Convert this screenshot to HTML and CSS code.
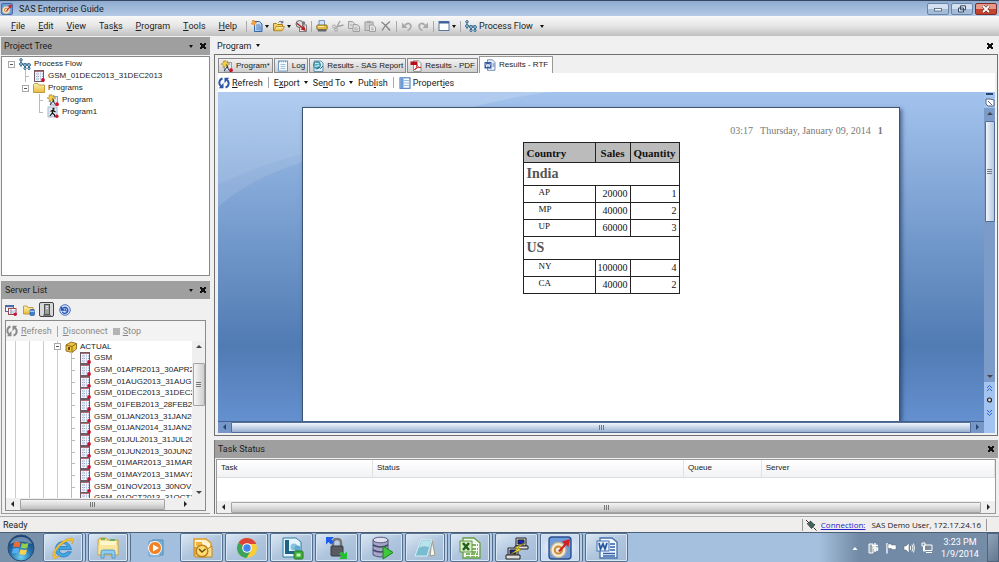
FILE: index.html
```html
<!DOCTYPE html>
<html lang="en">

<head>
	<meta charset="UTF-8" />
	<meta name="viewport" content="width=device-width, initial-scale=1.0" />
	<title>SAS Enterprise Guide</title>
	<link rel="stylesheet" href="styles.css">
</head>

<body>
	<!-- icon sprite -->
	<svg class="sprite" width="0" height="0" aria-hidden="true">
		<defs>
			<linearGradient id="gfolder" x1="0" y1="0" x2="0" y2="1"><stop offset="0" stop-color="#fff3b0" /><stop offset="1" stop-color="#e8b93c" /></linearGradient>
			<linearGradient id="gblue" x1="0" y1="0" x2="1" y2="1"><stop offset="0" stop-color="#eaf4ff" /><stop offset="1" stop-color="#7fb0e4" /></linearGradient>
			<radialGradient id="gorb" cx=".5" cy=".85" r=".8"><stop offset="0" stop-color="#6fd3f0" /><stop offset=".5" stop-color="#2873ae" /><stop offset="1" stop-color="#173f73" /></radialGradient>
		</defs>
		<symbol id="flow" viewBox="0 0 12 12">
			<path d="M2 1v8M2 6h8M6 6v4M10 6v4" stroke="#3b7898" fill="none" />
			<g fill="#d8f0fa" stroke="#1d5c86"><circle cx="2" cy="1.8" r="1.2" /><circle cx="2" cy="6" r="1.4" /><circle cx="6" cy="7" r="1.4" /><circle cx="10" cy="7" r="1.4" /><circle cx="10" cy="10.4" r="1.1" /><circle cx="6" cy="10.4" r="1.1" /></g>
		</symbol>
		<symbol id="data" viewBox="0 0 12 12">
			<rect x="1.500" y=".5" width="9" height="11" fill="#f4f6fa" stroke="#6b5b66" />
			<path d="M2 1.500h8" stroke="#b76a74" /><path d="M3 4h7M3 6.500h7M3 9h5" stroke="#8fa3cc" stroke-dasharray="1 1" /><path d="M4.500 2v9M7.500 2v9" stroke="#c3cbe0" stroke-width=".6" />
			<circle cx="10" cy="10" r="1.900" fill="#c8102e" />
		</symbol>
		<symbol id="folder" viewBox="0 0 12 12"><path d="M.5 10.500v-8l1-1h3l1 1.500h6v7.500z" fill="url(#gfolder)" stroke="#b48a25" stroke-width=".8" /></symbol>
		<symbol id="run" viewBox="0 0 12 12">
			<rect x="1" y="1" width="9" height="10" fill="#dfe8f4" stroke="#9aa8bd" stroke-width=".8" />
			<circle cx="6.500" cy="2.800" r="1.100" fill="#111" /><path d="M6.300 4 5.300 7l2 1.500.5 2.200M5.300 7 3 10M3.500 5.500l2.300-1.200 2.700 1.700" stroke="#111" stroke-width="1.200" fill="none" />
			<circle cx="9.800" cy="10.200" r="1.800" fill="#d01530" />
		</symbol>
		<symbol id="prog" viewBox="0 0 12 12">
			<rect x="3.500" y="2.500" width="7" height="8.500" fill="#dfe8f4" stroke="#7d8da5" stroke-width=".8" />
			<path d="m4 0 1 2 2-1-.6 2.200L9 4 6.500 5l.5 2.500L4.500 6 2 8l.3-3L0 4l2.300-1L2 .8l1.500 1z" fill="#f3cf45" stroke="#a87b10" stroke-width=".5" />
			<path d="M3 11l3-4 2 3M5.500 4.500l1.500 3" stroke="#333" fill="none" /><circle cx="10" cy="10.200" r="1.900" fill="#d01530" />
		</symbol>
		<symbol id="sas" viewBox="0 0 12 12">
			<rect x=".5" y=".5" width="11" height="11" rx="1.500" fill="#6f9ada" stroke="#2c4f8c" stroke-width=".7" />
			<circle cx="5.200" cy="7" r="3.800" fill="#f1ead9" stroke="#c0b28f" stroke-width=".7" /><circle cx="5.200" cy="7" r="1.800" fill="none" stroke="#c98a31" />
			<path d="M5 7.500 8.200 4 7 2.800l4-1.300-.8 4-1-1L6 8z" fill="#d6201f" />
		</symbol>
		<symbol id="new" viewBox="0 0 12 12">
			<path d="M3.500 1.500h5l2.500 2.500v7.500H3.500z" fill="url(#gblue)" stroke="#3568ab" /><path d="M5 5h4M5 7h5M5 9h5" stroke="#3c72b5" stroke-width=".8" /><path d="m3 0 .8 2L6 2.500 4 3.600 3.600 6 2.300 4.200 0 4l1.500-1.400L1 .8z" fill="#ffa53a" stroke="#c96c10" stroke-width=".4" />
		</symbol>
		<symbol id="open" viewBox="0 0 12 12"><path d="M.5 10.500v-7h3l1 1h5v2" fill="#f5d465" stroke="#ab7d18" /><path d="m.8 10.800 2.200-4.300h8.500L9 10.800z" fill="url(#gfolder)" stroke="#ab7d18" stroke-width=".8" /><path d="M5.500 2.500c1-1.500 3-1.500 4 0M9.800.8v2H7.800" stroke="#3a3a3a" fill="none" stroke-width=".8" /></symbol>
		<symbol id="help" viewBox="0 0 12 12"><rect x="4.500" y="5" width="7" height="6.500" fill="#eee" stroke="#666" stroke-width=".8" /><circle cx="4.500" cy="4" r="3.500" fill="#ddd" stroke="#666" /><path d="M2 2.500 7.500 7 9 5.500 11 11 5.500 9.500 7 8 1.500 4z" fill="#bd1d23" /><circle cx="8.500" cy="3" r="1.700" fill="#777" /></symbol>
		<symbol id="print" viewBox="0 0 12 12"><path d="M3 5V.5h5.500V5" fill="#cfe0f7" stroke="#5a7fb4" stroke-width=".8" /><rect x=".8" y="5" width="10.400" height="4.500" rx="1" fill="#e6b93f" stroke="#7b5d15" stroke-width=".8" /><path d="M1.800 9.500h8.500v2H1.800z" fill="#5f6571" /><path d="M2 6.500h6" stroke="#fff0b6" /></symbol>
		<symbol id="cut" viewBox="0 0 12 12"><path d="M8 1 4.500 7.500M11.500 5 4 7" stroke="#a4a4a4" stroke-width="1.300" fill="none" /><circle cx="2" cy="6.500" r="1.500" fill="none" stroke="#a4a4a4" /><circle cx="4" cy="9.700" r="1.500" fill="none" stroke="#a4a4a4" /></symbol>
		<symbol id="copy" viewBox="0 0 12 12"><g fill="#dcdcdc" stroke="#a0a0a0"><path d="M.5 1.500h4l2 2v5h-6z" /><path d="M5 4.500h4l2.500 2v5H5z" /></g><path d="M6.500 8h3M6.500 9.800h3.500M2 5h2" stroke="#a0a0a0" stroke-width=".8" /></symbol>
		<symbol id="paste" viewBox="0 0 12 12"><rect x="1" y="2" width="8" height="8.500" fill="#c9c9c9" stroke="#a0a0a0" /><rect x="3" y=".8" width="4" height="2.200" fill="#aaa" /><path d="M5.500 5h3.500l2.500 2v4.500h-6z" fill="#e6e6e6" stroke="#a0a0a0" /><path d="M7 8h2.500M7 9.700h3" stroke="#a0a0a0" stroke-width=".8" /></symbol>
		<symbol id="del" viewBox="0 0 12 12"><path d="M1.500 2c3 2 6 5 8.500 8.500M10 1.500C7 3.500 4 7 2 10.500" stroke="#828282" stroke-width="1.300" fill="none" /></symbol>
		<symbol id="undo" viewBox="0 0 12 12"><path d="M4 5.500C7 1.500 11 4 9.500 8c-.5 1.300-1.500 2-3 2.500" fill="none" stroke="#a8a8a8" stroke-width="1.700" /><path d="M1 2.500V8h5.500z" fill="#a8a8a8" /></symbol>
		<symbol id="win" viewBox="0 0 12 12"><rect x="1" y="1.500" width="10" height="9" fill="#fdfdfd" stroke="#56779f" /><path d="M1 2.500h10" stroke="#39639b" stroke-width="2" /></symbol>
		<symbol id="refresh" viewBox="0 0 12 12"><path d="M4.500 1.500C1 2.500.3 7 3 9.300M7.500 10.500C11 9.500 11.700 5 9 2.700" fill="none" stroke="currentColor" stroke-width="2" /><path d="M5.500 5.800v5.500H.8zM6.500 6.200V.7h4.700z" fill="currentColor" /></symbol>
		<symbol id="log" viewBox="0 0 12 12"><rect x="1.500" y="1" width="9" height="10" fill="#f4fafd" stroke="#6f97bd" /><path d="M2 1.500h8" stroke="#73a0ca" stroke-width="1.500" stroke-dasharray="1 1" /><path d="M3.500 4.500h5M3.500 6.500h5M3.500 8.500h5" stroke="#8db3d2" stroke-width=".8" /></symbol>
		<symbol id="report" viewBox="0 0 12 12"><path d="M2 1h7l2 2v8.500H2z" fill="#d9edf5" stroke="#4f7f9a" stroke-width=".8" /><circle cx="5" cy="5" r="3.500" fill="#4faabc" stroke="#1e6c86" stroke-width=".7" /><path d="M3 3.500c2-1 3 1 4 0M2.500 6c2 1 3-1 5 0" stroke="#e6fbff" fill="none" /><path d="M5 9.500 7 7l1.500 1.500L11 6" stroke="#1c688b" fill="none" /></symbol>
		<symbol id="pdf" viewBox="0 0 12 12"><path d="M3.500.8h5l2.500 2.500v8H3.500z" fill="#fff" stroke="#777" stroke-width=".8" /><path d="M.5 1.500h7v3.500h-7z" fill="#b90e17" /><path d="M4.500 10C6 9 7.300 6 6.700 4.500c2 3 3 3.500 4 3C8 7 6 8 4.500 10z" fill="none" stroke="#c41821" /></symbol>
		<symbol id="rtf" viewBox="0 0 12 12"><path d="M3.500.8h5l2.500 2.500v8H3.500z" fill="#eaf2ff" stroke="#5575a5" stroke-width=".8" /><rect x=".5" y="3" width="7" height="6.500" fill="#35589c" /><path d="m1.800 4.500 1 3.500L4 5l1.200 3 1-3.500" stroke="#fff" stroke-width=".9" fill="none" /><path d="M8.500 5h2M8.500 7h2" stroke="#5575a5" /></symbol>
		<symbol id="prop" viewBox="0 0 12 12"><rect x="1" y=".8" width="10" height="10.500" fill="#f8fbff" stroke="#3e6fae" /><path d="M1.500 1.300h3v9.500h-3z" fill="#5c96dd" /><path d="M4.500 3.500H11M4.500 6H11M4.500 8.500H11M1 3.500h3M1 6h3M1 8.500h3" stroke="#86a9d4" stroke-width=".8" /></symbol>
		<symbol id="cube" viewBox="0 0 12 12"><path d="m1 4 5-3 5.500 1.500V8L7 11.500 1 10z" fill="#edc141" stroke="#7c5d0e" stroke-width=".8" /><path d="m1 4 6 1.500v6M7 5.500l4.500-3" stroke="#7c5d0e" stroke-width=".8" fill="none" /><path d="M3 6h2v3H3z" fill="#6b5010" /></symbol>
		<symbol id="server" viewBox="0 0 12 12"><rect x="3.500" y=".5" width="5" height="10" fill="#9aa3a0" stroke="#4b5250" /><path d="M5 2.500h2M5 4.500h2" stroke="#eef" /><path d="M2 11.300h8" stroke="#666" /></symbol>
		<symbol id="globe" viewBox="0 0 12 12"><circle cx="6" cy="6" r="5.300" fill="#cfe0fa" stroke="#4f74bd" /><path d="M3.500 4.500a3 3 0 1 1-.3 3.300" stroke="#2450b0" stroke-width="1.300" fill="none" /><path d="M2 2.500v4h3.500zM6 4v2.500l2 1" fill="#2450b0" stroke="#2450b0" stroke-width=".6" /></symbol>
		<symbol id="libfolder" viewBox="0 0 12 12"><path d="M.5 10v-8h3.500l1 1.500h5V10z" fill="url(#gfolder)" stroke="#b48a25" stroke-width=".8" /><rect x="7" y="5.500" width="4.500" height="6" rx="1" fill="#3f7ed0" stroke="#1d4f94" stroke-width=".6" /><path d="M7 7.300h4.500" stroke="#bcd8ff" /></symbol>
		<symbol id="tables" viewBox="0 0 12 12"><rect x=".5" y="1.500" width="8" height="6" fill="#fff" stroke="#506a9a" /><path d="M.5 2.500h8" stroke="#4a6fb0" stroke-width="1.500" /><rect x="3.500" y="4.500" width="7.500" height="6" fill="#fff" stroke="#9c4a52" /><path d="M5 7h5M5 9h4M6 5v5" stroke="#8496bf" stroke-width=".8" /><circle cx="10.200" cy="10.200" r="1.700" fill="#c8102e" /></symbol>
		<symbol id="plug" viewBox="0 0 12 12"><path d="m1 1 3 3M8.500 8.500l3 3M2 5l4-3M6 9l4-4" stroke="#333" /><path d="m3 5.500 3-3 3.500 3.500-3 3.500z" fill="#3c6864" stroke="#222" stroke-width=".7" /></symbol>
	</svg>

	<header class="titlebar">
		<svg class="icon"><use href="#sas" /></svg>
		<h1>SAS Enterprise Guide</h1>
		<div class="winbtns">
			<button aria-label="Minimize"><svg viewBox="0 0 12 8"><rect x="2.500" y="3.500" width="7" height="2.500" fill="#fff" stroke="#4b5d78" stroke-width=".8" /></svg></button>
			<button aria-label="Restore"><svg viewBox="0 0 12 8"><path d="M4.500.8h5v4h-5zM2.500 3h5v4h-5z" fill="#dfe9f6" stroke="#3b4a62" /></svg></button>
			<button class="close" aria-label="Close"><svg viewBox="0 0 12 8"><path d="m3 1 6 6M9 1 3 7" stroke="#5b2a2a" stroke-width="3" /><path d="m3 1 6 6M9 1 3 7" stroke="#fff" stroke-width="1.800" /></svg></button>
		</div>
	</header>

	<div class="menubar">
		<nav class="menus">
			<button><u>F</u>ile</button>
			<button><u>E</u>dit</button>
			<button><u>V</u>iew</button>
			<button>Tas<u>k</u>s</button>
			<button><u>P</u>rogram</button>
			<button><u>T</u>ools</button>
			<button><u>H</u>elp</button>
		</nav>
		<div class="tools">
			<i class="sep"></i>
			<button class="drop" aria-label="New"><svg class="icon"><use href="#new" /></svg></button>
			<button class="drop" aria-label="Open"><svg class="icon"><use href="#open" /></svg></button>
			<button aria-label="Data"><svg class="icon"><use href="#help" /></svg></button>
			<i class="sep"></i>
			<button aria-label="Print"><svg class="icon"><use href="#print" /></svg></button>
			<button aria-label="Cut"><svg class="icon"><use href="#cut" /></svg></button>
			<button aria-label="Copy"><svg class="icon"><use href="#copy" /></svg></button>
			<button aria-label="Paste"><svg class="icon"><use href="#paste" /></svg></button>
			<button aria-label="Delete"><svg class="icon"><use href="#del" /></svg></button>
			<i class="sep"></i>
			<button aria-label="Undo"><svg class="icon"><use href="#undo" /></svg></button>
			<button aria-label="Redo"><svg class="icon flip"><use href="#undo" /></svg></button>
			<i class="sep"></i>
			<button class="drop" aria-label="Window"><svg class="icon"><use href="#win" /></svg></button>
			<i class="sep"></i>
			<button class="drop flowbtn"><svg class="icon"><use href="#flow" /></svg><span>Process Flow</span></button>
		</div>
	</div>

	<main class="main">
		<aside class="side">
			<section class="panel project">
				<div class="panelhead"><h2>Project Tree</h2><button class="caret" aria-label="Options"></button><button class="x" aria-label="Close"></button></div>
				<ul class="tree">
					<li><i class="exp"></i><svg class="icon"><use href="#flow" /></svg>Process Flow</li>
					<li class="l1"><i class="twig"></i><svg class="icon"><use href="#data" /></svg>GSM_01DEC2013_31DEC2013</li>
					<li class="l1"><i class="exp"></i><svg class="icon"><use href="#folder" /></svg>Programs</li>
					<li class="l2"><i class="twig"></i><svg class="icon"><use href="#prog" /></svg>Program</li>
					<li class="l2"><i class="twig last"></i><svg class="icon"><use href="#run" /></svg>Program1</li>
				</ul>
			</section>
			<section class="panel server">
				<div class="panelhead"><h2>Server List</h2><button class="caret" aria-label="Options"></button><button class="x" aria-label="Close"></button></div>
				<div class="servertools">
					<button aria-label="Tables"><svg class="icon"><use href="#tables" /></svg></button>
					<button aria-label="Libraries"><svg class="icon"><use href="#libfolder" /></svg></button>
					<button class="on" aria-label="Servers"><svg class="icon"><use href="#server" /></svg></button>
					<button aria-label="Web"><svg class="icon"><use href="#globe" /></svg></button>
				</div>
				<div class="inset">
					<div class="actions">
						<button disabled><svg class="icon"><use href="#refresh" /></svg><span><u>R</u>efresh</span></button>
						<i class="sep"></i>
						<button disabled><span><u>D</u>isconnect</span></button>
						<button disabled><i class="stop"></i><span><u>S</u>top</span></button>
					</div>
					<div class="listrow">
						<ul class="tree serverlist">
							<li class="root"><i class="exp"></i><svg class="icon"><use href="#cube" /></svg>ACTUAL</li>
							<li><i class="twig"></i><svg class="icon"><use href="#data" /></svg>GSM</li>
							<li><i class="twig"></i><svg class="icon"><use href="#data" /></svg>GSM_01APR2013_30APR2013</li>
							<li><i class="twig"></i><svg class="icon"><use href="#data" /></svg>GSM_01AUG2013_31AUG2013</li>
							<li><i class="twig"></i><svg class="icon"><use href="#data" /></svg>GSM_01DEC2013_31DEC2013</li>
							<li><i class="twig"></i><svg class="icon"><use href="#data" /></svg>GSM_01FEB2013_28FEB2013</li>
							<li><i class="twig"></i><svg class="icon"><use href="#data" /></svg>GSM_01JAN2013_31JAN2013</li>
							<li><i class="twig"></i><svg class="icon"><use href="#data" /></svg>GSM_01JAN2014_31JAN2014</li>
							<li><i class="twig"></i><svg class="icon"><use href="#data" /></svg>GSM_01JUL2013_31JUL2013</li>
							<li><i class="twig"></i><svg class="icon"><use href="#data" /></svg>GSM_01JUN2013_30JUN2013</li>
							<li><i class="twig"></i><svg class="icon"><use href="#data" /></svg>GSM_01MAR2013_31MAR2013</li>
							<li><i class="twig"></i><svg class="icon"><use href="#data" /></svg>GSM_01MAY2013_31MAY2013</li>
							<li><i class="twig"></i><svg class="icon"><use href="#data" /></svg>GSM_01NOV2013_30NOV2013</li>
							<li><i class="twig"></i><svg class="icon"><use href="#data" /></svg>GSM_01OCT2013_31OCT2013</li>
						</ul>
						<div class="vscroll"><i class="arr up"></i><i class="thumb"></i><i class="arr down"></i></div>
					</div>
					<div class="hscroll side-h"><i class="arr left"></i><i class="thumb"></i><i class="arr right"></i></div>
				</div>
			</section>
		</aside>

		<div class="work">
			<div class="workhead"><button class="drop">Program</button><button class="x" aria-label="Close"></button></div>
			<section class="results">
				<div class="tabs">
					<button><svg class="icon"><use href="#prog" /></svg>Program*</button>
					<button><svg class="icon"><use href="#log" /></svg>Log</button>
					<button><svg class="icon"><use href="#report" /></svg>Results - SAS Report</button>
					<button><svg class="icon"><use href="#pdf" /></svg>Results - PDF</button>
					<button class="active"><svg class="icon"><use href="#rtf" /></svg>Results - RTF</button>
				</div>
				<div class="toolbar">
					<button class="blue"><svg class="icon"><use href="#refresh" /></svg><span><u>R</u>efresh</span></button>
					<i class="sep"></i>
					<button class="drop"><span>E<u>x</u>port</span></button>
					<button class="drop"><span>Se<u>n</u>d To</span></button>
					<button><span>Pub<u>l</u>ish</span></button>
					<i class="sep"></i>
					<button><svg class="icon"><use href="#prop" /></svg><span>Propert<u>i</u>es</span></button>
				</div>
				<div class="viewer">
					<div class="docarea">
						<div class="canvas">
							<svg class="swoosh" viewBox="0 0 766 329" preserveAspectRatio="none">
								<path d="M0 0h330Q290 6 255 15L85 62Q35 75 0 93z" fill="#fff" fill-opacity=".16" />
								<path d="M0 93Q35 75 85 62v8Q35 85 0 115z" fill="#fff" fill-opacity=".1" />
							</svg>
							<article class="page">
								<p class="stamp"><span>03:17</span><span>Thursday, January 09, 2014</span><b>1</b></p>
								<table class="report">
									<colgroup><col class="c1"><col class="c2"><col class="c3"></colgroup>
									<thead>
										<tr><th>Country</th><th class="r">Sales</th><th class="r">Quantity</th></tr>
									</thead>
									<tbody>
										<tr class="group"><th colspan="3">India</th></tr>
										<tr><td>AP</td><td>20000</td><td>1</td></tr>
										<tr><td>MP</td><td>40000</td><td>2</td></tr>
										<tr><td>UP</td><td>60000</td><td>3</td></tr>
										<tr class="group"><th colspan="3">US</th></tr>
										<tr><td>NY</td><td>100000</td><td>4</td></tr>
										<tr><td>CA</td><td>40000</td><td>2</td></tr>
									</tbody>
								</table>
							</article>
						</div>
						<div class="hscroll doc-h"><i class="arr left"></i><i class="thumb"></i><i class="arr right"></i></div>
					</div>
					<div class="doc-v">
						<i class="split"></i>
						<svg class="ruler" viewBox="0 0 10 10"><path d="M1 2h4l4 1v6H3L1 7z" fill="#fff" stroke="#57627a" /><path d="M3 4l4 4" stroke="#57627a" /></svg>
						<div class="vscroll"><i class="arr up"></i><i class="thumb"></i><i class="arr down"></i></div>
						<svg class="browse" viewBox="0 0 11 37"><path d="M3 6l2.500-2.500L8 6M3 9l2.500-2.500L8 9M3 28l2.500 2.500L8 28M3 31l2.500 2.500L8 31" fill="none" stroke="#2d62d8" /><circle cx="5.500" cy="18" r="2" fill="#ddd" stroke="#222" stroke-width="1.200" /></svg>
					</div>
				</div>
			</section>
			<section class="status">
				<div class="panelhead"><h2>Task Status</h2><button class="x" aria-label="Close"></button></div>
				<div class="tasks">
					<table class="tasktable">
						<colgroup><col class="t1"><col class="t2"><col class="t3"><col></colgroup>
						<thead><tr><th>Task</th><th>Status</th><th>Queue</th><th>Server</th></tr></thead>
					</table>
					<div class="hscroll task-h"><i class="arr left"></i><i class="thumb"></i><i class="arr right"></i></div>
				</div>
			</section>
		</div>
	</main>

	<footer class="statusbar">
		<span class="ready">Ready</span>
		<div class="conn"><svg class="icon"><use href="#plug" /></svg><a href="#">Connection:</a><span>SAS Demo User, 172.17.24.16</span></div>
	</footer>

	<div class="taskbar">
		<button class="start" aria-label="Start"><svg viewBox="0 0 28 28"><circle cx="14" cy="14" r="13" fill="url(#gorb)" stroke="#2a4c74" /><path d="M7 9q3-2 6.500-.5L12.500 13.500Q9 12 6 13.500z" fill="#ee6a35" /><path d="M14.800 9q3 1.500 6.700 0l-1.200 5q-3 1.300-6.500-.2z" fill="#93cf4b" /><path d="M5.800 14.800q3-1.500 6.500-.2l-1.200 5q-3-1.500-6.300.2z" fill="#55aef0" /><path d="M13.500 15.200q3 1.500 6.500.2l-1.200 4.800q-3.300 1.300-6.500-.2z" fill="#fbd24b" /><path d="M3 10a12 12 0 0 1 22 0Q14 5 3 10z" fill="#fff" fill-opacity=".35" /></svg></button>
		<button class="app stack" aria-label="Internet Explorer"><svg viewBox="0 0 24 24"><path d="M20.500 13.500H8.300c.3 5 5.700 5.500 7.700 2.300h4.200C16.500 24 4.500 22 4.500 13S18 2 20.500 13.500zM8.500 10.600h7.800c-.6-4-7-4-7.800 0z" fill="#3fa8e6" stroke="#1c70b5" stroke-width=".7" /><path d="M2.500 22C-1 18 9 3 20 2c4 0 2.500 4 1 6 .5-2 .5-4-2-3.500C10 6 2 17 4.500 20c1.500 1.500 4-.5 5-1C7 22 4 23.500 2.500 22z" fill="#f5c431" stroke="#c18d14" stroke-width=".4" /></svg></button>
		<button class="app stack" aria-label="Explorer"><svg viewBox="0 0 24 24"><path d="M2 19V4l2-2h6l2 2h10v15z" fill="#f6dc85" stroke="#c9a441" /><path d="M4 5h16v5H4z" fill="#fff6cc" /><path d="M5 3h4M14 4h5" stroke="#4aa65a" stroke-width="1.500" /><path d="M2.500 9h19v9h-19z" fill="#f9e59b" /><path d="M5 22v-6q0-2 2-2h10q2 0 2 2v6h-3v-4H8v4z" fill="#8fcdf0" stroke="#448cba" stroke-width=".8" /></svg></button>
		<button class="app plain" aria-label="Media Player"><svg viewBox="0 0 24 24"><path d="M8 4h11v15H8z" fill="#79b5df" stroke="#5289b4" /><path d="M5 5h11v15H5z" fill="#a6d0ee" stroke="#6b9fc6" /><circle cx="11" cy="12" r="6.500" fill="#f28125" stroke="#fff" /><path d="M9 8.500v7l6-3.500z" fill="#fff" /></svg></button>
		<button class="app" aria-label="Outlook"><svg viewBox="0 0 24 24"><path d="M4 3h12l5 4v12H4z" fill="#fff3cd" stroke="#dd9d2c" stroke-width="1.500" /><path d="M6 6h6v4H6z" fill="#f2b33c" /><path d="m5 11 8 5 9-6v11H5z" fill="#fbdc8b" stroke="#c5861c" /><circle cx="12" cy="15" r="5.800" fill="#ffdd72" stroke="#be811c" stroke-width="1.500" /><path d="m9 13 3 3 3.500-3" stroke="#6c4b13" stroke-width="1.500" fill="none" /></svg></button>
		<button class="app" aria-label="Chrome"><svg viewBox="0 0 24 24"><circle cx="12" cy="12" r="10" fill="#fbce37" /><path d="M12 12 3.300 7A10 10 0 0 1 21 7.500H12z" fill="#dc4437" /><path d="M3.300 7A10 10 0 0 0 11.500 22L16 14.500 12 12z" fill="#3da25a" /><path d="M12 7.500h9.100" stroke="#dc4437" /><circle cx="12" cy="12" r="4.800" fill="#fff" /><circle cx="12" cy="12" r="3.700" fill="#4286ed" /></svg></button>
		<button class="app" aria-label="Lync"><svg viewBox="0 0 24 24"><path d="M3 2h13l5 4v15H3z" fill="#e6f4fb" stroke="#2b7ea3" /><path d="M5 4h4v11h5v3H5z" fill="#1f6386" /><circle cx="14" cy="11" r="3.500" fill="#85c1dc" /><circle cx="17.500" cy="12.500" r="3" fill="#5faacc" /><rect x="14" y="15" width="9" height="8" rx="1.500" fill="#3eae36" stroke="#22771e" /><rect x="16.500" y="17.500" width="4" height="3" fill="#c4f1bb" /></svg></button>
		<button class="app" aria-label="Secure copy"><svg viewBox="0 0 24 24"><path d="M8 11V7q0-4 4-4t4 4v4" fill="none" stroke="#777" stroke-width="2.500" /><rect x="6" y="10" width="12" height="10" rx="1" fill="#585c62" stroke="#36393d" /><path d="M1 1h8L6.500 3.500 9 6 6 8.500 3.500 6 1 8.500z" fill="#1d5ded" /><path d="M22 23h-8l2.500-2.500L14 18l2.500-2.500L19.500 18l2.500-2.500z" fill="#24bf31" /></svg></button>
		<button class="app" aria-label="Database"><svg viewBox="0 0 24 24"><path d="M3 4v15q7.500 4 15 0V4z" fill="#a5a5c6" stroke="#555580" /><ellipse cx="10.500" cy="4" rx="7.500" ry="2.800" fill="#e0e0ef" stroke="#555580" /><path d="M3 9q7.500 4 15 0M3 14q7.500 4 15 0" stroke="#44446e" stroke-width="1.500" fill="none" /><path d="M13 10v13l10-6.500z" fill="#41c83c" stroke="#187d1c" /></svg></button>
		<button class="app stack" aria-label="Notepad"><svg viewBox="0 0 24 24"><path d="m19 4 3 15-5 1z" fill="#f6f6ef" stroke="#9a9a8a" /><path d="M8 4h11l-5 16H2z" fill="#79bbd0" stroke="#d7eef5" /><path d="M8.500 5H18l-2 6Q9 9 6 12z" fill="#b8e3ed" /></svg></button>
		<button class="app stack" aria-label="Excel"><svg viewBox="0 0 24 24"><path d="M5 2h11l6 5v15H5z" fill="#f4faef" stroke="#679c46" stroke-width="1.300" /><path d="M14 9h6M14 13h6M8 18h12M14 16h6M8 21h12" stroke="#7fb55e" stroke-width="2" stroke-dasharray="4 1" /><rect x="2" y="5" width="12" height="11" fill="#d7edc5" stroke="#5d9640" /><path d="m5 7 6 7M11 7l-6 7" stroke="#245f1f" stroke-width="2.500" /></svg></button>
		<button class="app" aria-label="PuTTY"><svg viewBox="0 0 24 24"><g stroke="#222"><path d="M11 2h10v8H11z" fill="#ccc" /><path d="M13 4h6v4h-6z" fill="#1624b5" /><path d="M10 10h13v3H10z" fill="#ddd" /><path d="M3 12h10v7H3z" fill="#ccc" /><path d="M5 14h6v3.500H5z" fill="#1624b5" /><path d="M1 19h14v4H1z" fill="#ddd" /></g><path d="m19 7-9 5 3 1-7 5 10-4-3-2z" fill="#ffed2d" stroke="#8b7b06" stroke-width=".6" /></svg></button>
		<button class="app stack current" aria-label="SAS Enterprise Guide"><svg><use href="#sas" /></svg></button>
		<button class="app" aria-label="Word"><svg viewBox="0 0 24 24"><path d="M5 2h12l5 4v16H5z" fill="#f5f9ff" stroke="#4270ad" stroke-width="1.300" /><path d="M15 8h5M15 11h5M15 14h5M8 17.500h12M8 20h12" stroke="#315fa6" stroke-width="1.500" /><rect x="2" y="5" width="12" height="10" fill="#e5effc" stroke="#416fad" /><path d="m4 7 1.500 6L8 8l2 5 2-6" stroke="#26569d" stroke-width="1.800" fill="none" /></svg></button>
		<div class="tray">
			<svg viewBox="0 0 12 12"><path d="M3.500 8h5L6 5z" fill="#fff" /></svg>
			<svg viewBox="0 0 12 12"><path d="M2 2h4v9H2z" fill="#9aa" stroke="#fff" /><path d="M5 3.500h6M8 1v9M6 6h4.500v2H7" stroke="#fff" stroke-width="1.400" fill="none" /></svg>
			<svg viewBox="0 0 12 12"><path d="M2 1v10.500" stroke="#fff" stroke-width="1.300" /><path d="M3 2h3.500v1H11v4.500H6.500v-1H3z" fill="#fff" stroke="#56697e" stroke-width=".5" /></svg>
			<svg viewBox="0 0 12 12"><path d="M1 4h2l3-3v10L3 8H1z" fill="#fff" stroke="#56697e" stroke-width=".5" /><path d="M7.500 4v4M9 2.500q2 3.500 0 7M10.500 1.500q2 4.500 0 9" stroke="#fff" fill="none" stroke-width=".9" /></svg>
			<svg viewBox="0 0 12 12"><path d="M3.500 3H11v5.500H3.500z" fill="#7b8b9b" stroke="#fff" /><path d="M5 10.500h6M1 1h3v3H1zM2.500 4v5h2" stroke="#fff" fill="none" /></svg>
		</div>
		<div class="clock"><time>3:23 PM</time><time>1/9/2014</time></div>
		<button class="desk" aria-label="Show desktop"></button>
	</div>
</body>

</html>
```
FILE: styles.css
```css
* {
	padding: 0;
	margin: 0;
	list-style: none;
	box-sizing: border-box;
}

body {
	display: flex;
	flex-direction: column;
	height: 100vh;
	overflow: hidden;
	background: #f0f0f0;
	color: #1c1c1c;
	font: 9px/12px Roboto, "Open Sans", sans-serif;
}

button {
	display: flex;
	align-items: center;
	border: 0;
	background: none;
	font: inherit;
	color: inherit;
	white-space: nowrap;
}

h1,
h2 {
	font-size: 9px;
	font-weight: normal;
	flex: 1;
}

.sprite {
	position: absolute;
}

.icon {
	width: 12px;
	height: 12px;
	flex: none;
}

.flip {
	transform: scaleX(-1);
}

.sep {
	width: 1px;
	height: 11px;
	background: #a9a9a9;
	flex: none;
}

.drop::after,
.caret::after {
	content: "";
	border: 2px solid transparent;
	border-top: 3px solid #111;
	border-bottom: 0;
	margin-left: 4px;
}

.x {
	width: 8px;
	height: 8px;
	flex: none;
	background:
		linear-gradient(45deg, transparent 40%, #111 40%, #111 60%, transparent 60%) center / 6px 6px no-repeat,
		linear-gradient(-45deg, transparent 40%, #111 40%, #111 60%, transparent 60%) center / 6px 6px no-repeat;
}

/* title and menus */
.titlebar {
	display: flex;
	align-items: center;
	gap: 6px;
	height: 16px;
	padding: 0 2px 0 1px;
	border-top: 1px solid #35475f;
	background: linear-gradient(#8fabd0, #b4cae5);
	flex: none;
}

.winbtns {
	display: flex;
	gap: 2px;
}

.winbtns button {
	width: 22px;
	height: 12px;
	justify-content: center;
	border: 1px solid #6b83a5;
	border-radius: 2px;
	background: linear-gradient(#d2e0f0 45%, #a5bcd8 50%);
}

.winbtns .close {
	border-color: #7c2d25;
	background: linear-gradient(#e59a89 45%, #c4432c 50%);
}

.winbtns svg {
	width: 12px;
	height: 8px;
}

.menubar {
	display: flex;
	align-items: center;
	height: 20px;
	background: linear-gradient(#f8f8f8, #e6e6e6 50%, #bfbfbf);
	flex: none;
}

.menus {
	display: flex;
	gap: 13px;
	width: 246px;
	padding-left: 11px;
}

.tools {
	display: flex;
	align-items: center;
	gap: 4px;
}

.tools .drop::after {
	margin-left: 2px;
}

.flowbtn {
	gap: 2px;
}

.tools .flowbtn::after {
	margin-left: 5px;
}

/* left column */
.main {
	display: flex;
	flex: 1;
	gap: 4px;
	min-height: 0;
	padding: 1px 1px 2px;
}

.side {
	display: flex;
	flex-direction: column;
	gap: 5px;
	width: 209px;
	flex: none;
}

.project {
	display: flex;
	flex-direction: column;
	flex: 1;
	min-height: 0;
}

.panelhead {
	display: flex;
	align-items: center;
	gap: 6px;
	height: 18px;
	padding: 0 3px;
	background: #9f9f9f;
	flex: none;
}

.caret::after {
	margin: 0;
}

.tree {
	font: 8px/12px "Liberation Sans", Arial, sans-serif;
}

.project .tree {
	flex: 1;
	margin-top: 1px;
	padding: 1px 0 0 6px;
	border: 1px solid #888;
	background: #fff;
}

.tree li {
	display: flex;
	align-items: center;
	gap: 3px;
	height: 12px;
	white-space: nowrap;
}

.l1 {
	padding-left: 14px;
}

.l2 {
	padding-left: 28px;
}

.exp,
.twig {
	width: 7px;
	height: 7px;
	margin-right: 1px;
	flex: none;
}

.exp {
	border: 1px solid #a8a8a8;
	background: linear-gradient(#555, #555) center / 3px 1px no-repeat #fff;
}

.twig {
	height: 12px;
	background:
		linear-gradient(#bbb, #bbb) 3px 6px / 4px 1px no-repeat,
		linear-gradient(#bbb, #bbb) 3px 0 / 1px 12px no-repeat;
}

.twig.last {
	background-size: 4px 1px, 1px 6px;
}

.servertools {
	display: flex;
	align-items: center;
	gap: 3px;
	height: 21px;
	padding-left: 1px;
}

.servertools button {
	width: 15px;
	height: 15px;
	justify-content: center;
}

.servertools .on {
	border: 1px solid #444;
	border-radius: 2px;
	background: #d8d8d8;
}

.panel.server {
	border-left: 1px solid #999;
	border-bottom: 1px solid #999;
	padding-bottom: 2px;
}

.inset {
	margin: 0 4px 0 3px;
	border: 1px solid #8b8b8b;
}

.actions {
	display: flex;
	align-items: center;
	gap: 5px;
	height: 20px;
	background: #f3f3f3;
}

.actions button {
	gap: 3px;
	color: #8a8a8a;
}

.stop {
	width: 7px;
	height: 7px;
	background: #b4b4b4;
}

.listrow {
	display: flex;
	height: 157px;
	overflow: hidden;
	background: #fff;
}

.serverlist {
	display: flex;
	flex-direction: column;
	flex: 1;
	height: 163px;
	overflow: hidden;
	background:
		linear-gradient(#ccc, #ccc) 9px 0 / 1px 100% no-repeat,
		linear-gradient(#ccc, #ccc) 23px 0 / 1px 100% no-repeat,
		linear-gradient(#ccc, #ccc) 37px 0 / 1px 100% no-repeat,
		linear-gradient(#ccc, #ccc) 51px 0 / 1px 100% no-repeat;
}

.serverlist li {
	flex: 1;
	min-height: 0;
	padding-left: 62px;
}

.serverlist .root {
	padding-left: 48px;
}

/* scroll bars */
.vscroll,
.hscroll {
	display: flex;
	align-items: center;
	justify-content: space-between;
	background: #efefef;
	flex: none;
}

.vscroll {
	flex-direction: column;
	width: 13px;
	padding: 4px 0;
}

.hscroll {
	height: 12px;
	padding: 0 5px;
}

.arr {
	border: 3px solid transparent;
	flex: none;
}

.up { border-bottom-color: #444; border-top: 0; }
.down { border-top-color: #444; border-bottom: 0; }
.left { border-right-color: #222; border-left: 0; }
.right { border-left-color: #222; border-right: 0; }

.thumb {
	border: 1px solid #a3a3a3;
	border-radius: 1px;
}

.vscroll .thumb {
	width: 12px;
	height: 43px;
	background:
		repeating-linear-gradient(#777 0 1px, transparent 1px 2px) center / 5px 5px no-repeat,
		linear-gradient(90deg, #f6f6f6, #cfcfcf);
}

.hscroll .thumb {
	height: 11px;
	background:
		repeating-linear-gradient(90deg, #777 0 1px, transparent 1px 2px) center / 5px 5px no-repeat,
		linear-gradient(#f4f4f4, #dcdcdc 50%, #bfbfbf);
}

.listrow .vscroll .thumb {
	margin: 15px 0 auto;
}

.side-h .thumb {
	width: 145px;
	margin: 0 auto 0 6px;
}

.side-h {
	padding-right: 18px;
}

/* work area */
.work {
	display: flex;
	flex-direction: column;
	flex: 1;
	min-width: 0;
}

.workhead {
	display: flex;
	align-items: center;
	justify-content: space-between;
	height: 17px;
	padding: 0 4px 0 3px;
	flex: none;
}

.results {
	display: flex;
	flex-direction: column;
	flex: 1;
	min-height: 0;
	padding: 1px 2px 2px 3px;
	border: 1px solid #707070;
}

.tabs {
	display: flex;
	align-items: flex-end;
	height: 17px;
	font-family: "Liberation Sans", Arial, sans-serif;
	font-size: 8px;
	flex: none;
}

.tabs button {
	gap: 3px;
	height: 15px;
	margin-right: 1px;
	padding: 0 2px;
	border: 1px solid #8a8a8a;
	background: linear-gradient(#f2f2f2, #cfcfcf);
}

.tabs .active {
	height: 17px;
	padding: 0 4px;
	border-color: #999;
	border-bottom: 0;
	background: #fff;
}

.toolbar {
	display: flex;
	align-items: center;
	gap: 5px;
	height: 19px;
	background: #fff;
	flex: none;
}

.toolbar button {
	gap: 2px;
}

.toolbar .drop::after {
	margin-left: 2px;
}

.blue .icon {
	color: #2b56a8;
}

.viewer {
	display: flex;
	flex: 1;
	min-height: 0;
}

.docarea {
	display: flex;
	flex-direction: column;
	flex: 1;
	min-width: 0;
}

.canvas {
	position: relative;
	flex: 1;
	min-height: 0;
	overflow: hidden;
	padding: 15px 11% 0;
	background: linear-gradient(#a3c3ed, #507bb3 77%, #6490cf);
}

.swoosh {
	position: absolute;
	inset: 0;
	width: 100%;
	height: 100%;
}

.page {
	position: relative;
	height: 100%;
	padding: 17px 16px 0;
	border: 1px solid #3d536f;
	border-bottom: 0;
	background: #fff;
	box-shadow: 2px 2px 4px rgba(20, 40, 80, .6);
	font-family: "Liberation Serif", "Times New Roman", serif;
}

.stamp {
	display: flex;
	justify-content: flex-end;
	gap: 7px;
	margin-bottom: 5px;
	font-size: 10px;
	line-height: 12px;
	color: #777;
}

.report {
	width: 156px;
	margin: 0 auto;
	table-layout: fixed;
	border-collapse: collapse;
	color: #111;
}

.c1 { width: 72px; }
.c2 { width: 35px; }
.c3 { width: 49px; }

.report th,
.report td {
	height: 17px;
	border: 1px solid #222;
	padding: 0 2px 0 3px;
	font-size: 10px;
	line-height: 12px;
	text-align: right;
	vertical-align: middle;
}

.report thead th {
	height: 20px;
	background: #bbb;
	font-size: 11px;
}

.report th.r {
	padding: 0;
	text-align: center;
}

.report th:first-child {
	text-align: left;
}

.report .group th {
	height: 23px;
	font-size: 14px;
	line-height: 16px;
	color: #555;
}

.report td:first-child {
	padding-left: 15px;
	font-size: 9px;
	text-align: left;
	vertical-align: top;
}

.report td:nth-child(2) {
	padding-left: 0;
}

.doc-h {
	border-top: 1px solid #41618f;
	background: #7596c6;
}

.doc-h .thumb {
	flex: 1;
	margin: 0 5px;
	border-color: #536f98;
	background:
		repeating-linear-gradient(90deg, #778 0 1px, transparent 1px 2px) center / 5px 5px no-repeat,
		linear-gradient(#f0f5fc, #bccde4 60%, #98afcf);
}

.doc-h .left {
	border-right-color: #29446f;
}

.doc-h .right {
	border-left-color: #29446f;
}

.doc-v {
	display: flex;
	flex-direction: column;
	align-items: center;
	width: 11px;
	background: #a3c3f0;
}

.split {
	width: 7px;
	height: 2px;
	margin: 1px 0 2px;
	background: #29446f;
}

.ruler {
	width: 10px;
	height: 10px;
}

.doc-v .vscroll {
	flex: 1;
	width: 11px;
	margin-top: 1px;
	background: #7c9bc8;
}

.doc-v .thumb {
	width: 10px;
	height: 101px;
	margin: 6px 0 auto;
	border-color: #536f98;
	background:
		repeating-linear-gradient(#778 0 1px, transparent 1px 2px) center / 5px 5px no-repeat,
		linear-gradient(90deg, #f0f5fc, #b4c6de);
}

.browse {
	width: 11px;
	height: 37px;
	margin-bottom: 14px;
}

.status {
	margin-top: 4px;
	border-left: 1px solid #777;
	flex: none;
}

.tasks {
	margin: 1px 2px 0 1px;
	border: 1px solid #999;
	background: #fff;
}

.tasktable {
	width: 100%;
	table-layout: fixed;
	border-collapse: collapse;
	font-family: "Liberation Sans", Arial, sans-serif;
	font-size: 8px;
	margin-bottom: 23px;
}

.tasktable th {
	height: 18px;
	padding: 0 4px;
	border-right: 1px solid #e2e2e2;
	border-bottom: 1px solid #ddd;
	background: linear-gradient(#fff, #f1f2f4);
	font-weight: normal;
	text-align: left;
}

.t1 { width: 20%; }
.t2 { width: 40%; }
.t3 { width: 10%; }

.task-h .thumb {
	flex: 1;
	margin: 0 6px;
}

/* status bar */
.statusbar {
	display: flex;
	align-items: center;
	justify-content: space-between;
	height: 16px;
	padding: 0 12px 0 3px;
	border-top: 1px solid #aaa;
	background: #f0eeec;
	flex: none;
}

.conn {
	display: flex;
	align-items: center;
	gap: 4px;
	padding: 0 5px 0 2px;
	border-left: 1px solid #999;
	border-right: 1px solid #999;
	font-family: "Open Sans", sans-serif;
	font-size: 8px;
}

.conn a {
	color: #2424d0;
	margin-right: 2px;
}

/* windows task bar */
.taskbar {
	display: flex;
	gap: 2px;
	height: 30px;
	border-top: 1px solid #4b6078;
	background: linear-gradient(90deg, #7991ab 43px, #a4bfdd 44px, #a4c0de 82%, #7189a4 86%, #768da8);
	flex: none;
}

.start,
.app {
	width: 43px;
	justify-content: center;
	flex: none;
}

.start {
	width: 41px;
}

.start svg {
	width: 28px;
	height: 28px;
}

.app {
	border: 1px solid #55708f;
	border-radius: 2px;
	background: linear-gradient(150deg, #dce8f4, #b0c6de 50%, #a2bad5);
	box-shadow: inset 0 0 0 1px #d9e6f3;
}

.app svg {
	width: 24px;
	height: 24px;
}

.stack {
	width: 40px;
	margin-right: 3px;
	box-shadow: inset 0 0 0 1px #d9e6f3, 2px 0 0 #b9cee5, 3px 0 0 #55708f;
}

.plain {
	width: 45px;
	border: 0;
	background: none;
	box-shadow: none;
}

.current {
	background: radial-gradient(#fff, #cbdcf0 70%);
}

.tray {
	display: flex;
	align-items: center;
	gap: 6px;
	margin-left: auto;
}

.tray svg {
	width: 12px;
	height: 12px;
}

.clock {
	display: flex;
	flex-direction: column;
	justify-content: center;
	width: 50px;
	color: #fff;
	text-align: center;
}

.desk {
	width: 12px;
	border: 1px solid #4f647c;
	background: linear-gradient(135deg, #8fa3b9, #64798f);
}
```
